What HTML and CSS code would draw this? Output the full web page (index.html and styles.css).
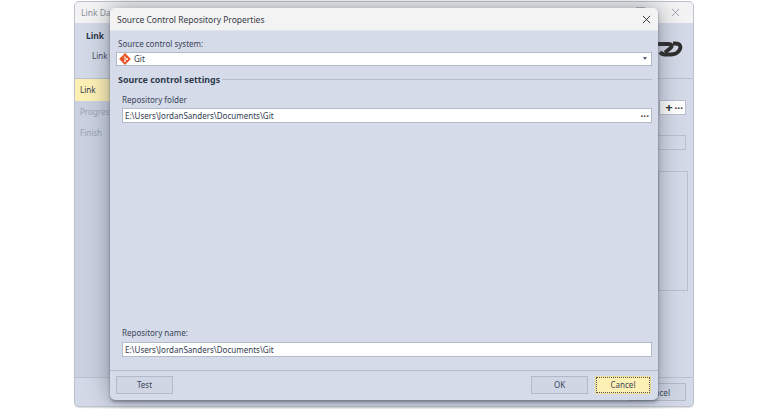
FILE: index.html
```html
<!DOCTYPE html>
<html lang="en">
<head>
<meta charset="utf-8">
<title>Source Control Repository Properties</title>
<link rel="stylesheet" href="styles.css">
</head>
<body>
<div class="stage">
  <section class="wizard">
    <header class="wizard-title">
      <span>Link Database to Source Control</span>
      <div class="wizard-ctrls">
        <i class="wizard-max"></i>
        <svg class="wizard-close" viewBox="0 0 10 10"><path d="M1 1l8 8M9 1l-8 8"/></svg>
      </div>
    </header>
    <div class="wizard-head">
      <div class="wizard-head-text">
        <strong>Link</strong>
        <span class="wizard-sub">Link your database</span>
      </div>
      <svg class="wizard-logo" viewBox="653 40 30 22"><path d="M657 46H668C672 46 672.500 48 670.500 50L665 54.500"/><path d="M673 45.500H675.500C680 45.500 681.500 48.500 679.500 52C677.500 55.500 675 56.500 671 56.500H665C663 56.500 661.500 56 660 54"/></svg>
    </div>
    <div class="wizard-body">
      <nav class="steps">
        <div class="step step-on">Link</div>
        <div class="step">Progress</div>
        <div class="step">Finish</div>
      </nav>
      <div class="wizard-main">
        <div class="mini-btns"><b>+</b><i>···</i></div>
        <div class="mini-field"></div>
        <div class="mini-box"></div>
      </div>
    </div>
    <footer class="wizard-foot"><button class="btn wizard-cancel">Cancel</button></footer>
  </section>

  <section class="dialog">
    <header class="dialog-title">
      <span>Source Control Repository Properties</span>
      <svg class="dialog-close" viewBox="0 0 10 10"><path d="M1 1l8 8M9 1l-8 8"/></svg>
    </header>
    <div class="dialog-body">
      <label class="lbl lbl-top">Source control system:</label>
      <div class="combo">
        <svg class="git" viewBox="0 0 12 12"><path d="M6 .1 11.900 6 6 11.900.1 6z" fill="#e8562a"/><path d="M4.400 2.800 6 4.400M6 4.400v3.400M6 4.400 8 6.200" stroke="#fff" stroke-width=".9" fill="none"/><circle cx="6" cy="8.200" r=".9" fill="#fff"/><circle cx="8.100" cy="6.200" r=".9" fill="#fff"/></svg>
        <span>Git</span>
        <i class="caret"></i>
      </div>
      <div class="group-head"><strong>Source control settings</strong><span class="rule"></span></div>
      <div class="group">
        <label class="lbl">Repository folder</label>
        <div class="field"><span>E:\Users\JordanSanders\Documents\Git</span><i class="dots">···</i></div>
        <div class="spacer"></div>
        <label class="lbl">Repository name:</label>
        <div class="field field-last"><span>E:\Users\JordanSanders\Documents\Git</span></div>
      </div>
    </div>
    <footer class="dialog-foot">
      <button class="btn">Test</button>
      <div class="foot-right">
        <button class="btn">OK</button>
        <button class="btn btn-focus">Cancel</button>
      </div>
    </footer>
  </section>
</div>
</body>
</html>
```
FILE: styles.css
```css
* { box-sizing: border-box; }
html, body { margin: 0; height: 100%; background: #fff; }
body { font-family: "Noto Sans", "Liberation Sans", Arial, sans-serif; font-size: 8px; color: #2f3a4d; overflow: hidden; }
.stage { position: relative; width: 768px; height: 409px; }

/* background wizard: a window on the desktop */
.wizard { position: absolute; left: 74px; top: 1px; width: 620px; height: 406px; display: flex; flex-direction: column; background: #d3d9e7; border: 1px solid #bcc3cd; border-radius: 5px; overflow: hidden; box-shadow: 0 1px 1px #ddd; }
.wizard-title { height: 21px; flex: none; background: #f3f3f3; color: #8a8f98; font-size: 8.5px; display: flex; align-items: center; justify-content: space-between; padding: 0 13px 0 6px; white-space: nowrap; }
.wizard-ctrls { display: flex; align-items: center; gap: 26px; }
.wizard-max { display: block; width: 9px; height: 11px; border: 1px solid #b5b9c0; }
.wizard-close { width: 9px; height: 9px; fill: none; stroke: #8e939b; stroke-width: .9; }
.wizard-head { height: 56px; flex: none; display: flex; justify-content: space-between; padding: 6px 10px 0 11px; border-bottom: 1px solid #b9c0cf; }
.wizard-head-text { display: flex; flex-direction: column; gap: 7px; white-space: nowrap; line-height: 13px; }
.wizard-head-text strong { font-size: 8.5px; color: #2b3548; }
.wizard-sub { padding-left: 6px; color: #3d4759; }
.wizard-logo { width: 30px; height: 22px; margin-top: 9px; fill: none; stroke: #2e2e2e; stroke-width: 3.800; }
.wizard-body { flex: 1; display: flex; min-height: 0; }
.steps { width: 36px; flex: none; background: #c9d0e0; }
.step { height: 21px; padding: 5px 0 0 5px; color: #98a0b2; white-space: nowrap; overflow: hidden; line-height: 12px; }
.step-on { height: 22px; background: #fdf0b4; color: #2f3a4d; }
.wizard-main { flex: 1; position: relative; }
.mini-btns { position: absolute; right: 7px; top: 21px; width: 27px; height: 15px; display: flex; align-items: center; justify-content: flex-end; gap: 2px; padding-right: 2px; background: #fff; border: 1px solid #b8bfce; font-size: 10px; color: #333; }
.mini-btns b { font-size: 13px; line-height: 1; }
.mini-btns i { font-style: normal; font-weight: bold; }
.mini-field { position: absolute; right: 7px; top: 56px; width: 30px; height: 15px; border: 1px solid #b8bfce; }
.mini-box { position: absolute; right: 5px; top: 92px; width: 30px; height: 120px; border: 1px solid #b8bfce; }
.wizard-foot { height: 29px; flex: none; border-top: 1px solid #b9c0cf; display: flex; justify-content: flex-end; align-items: center; padding-right: 7px; }
.wizard-cancel { width: 57px; }

/* modal dialog over the wizard */
.dialog { position: absolute; left: 110px; top: 8px; width: 548px; height: 392px; display: flex; flex-direction: column; background: #d5dbe8; border-radius: 5px; box-shadow: 0 2px 3px rgba(60,65,80,.5), 0 0 22px rgba(60,65,80,.5); overflow: hidden; }
.dialog-title { height: 23px; flex: none; background: #f3f3f3; border-bottom: 1px solid #e1e4ea; display: flex; align-items: center; justify-content: space-between; padding: 0 7px 0 7px; font-size: 8.5px; color: #333a46; white-space: nowrap; }
.dialog-close { width: 9px; height: 9px; fill: none; stroke: #222; stroke-width: 1; }
.dialog-body { flex: 1; display: flex; flex-direction: column; padding: 7px 6px 13px 6px; min-height: 0; }
.lbl { display: block; height: 11px; line-height: 11px; white-space: nowrap; color: #39445a; }
.lbl-top { padding-left: 2px; }
.combo { height: 14px; margin-top: 3px; display: flex; align-items: center; gap: 3px; padding: 0 4px 1px 2px; background: #fff; border: 1px solid #b3bbcb; }
.git { width: 12px; height: 12px; }
.combo span { flex: 1; }
.caret { width: 0; height: 0; border: 2.500px solid transparent; border-top: 3px solid #55617a; border-bottom: 0; }
.group-head { display: flex; align-items: center; gap: 2px; margin-top: 8px; height: 11px; padding-left: 2px; }
.group-head strong { font-size: 8.9px; color: #2f3a4d; white-space: nowrap; }
.rule { flex: 1; height: 1px; background: #b6bdcc; }
.group { flex: 1; display: flex; flex-direction: column; padding: 9px 0 0 6px; }
.field { height: 15px; margin-top: 3px; display: flex; align-items: center; justify-content: space-between; padding: 0 2px; background: #fff; border: 1px solid #b3bbcb; white-space: nowrap; }
.field-last { margin-top: 4px; }
.dots { font-style: normal; font-weight: bold; font-size: 10px; color: #444; }
.spacer { flex: 1; }
.dialog-foot { height: 30px; flex: none; border-top: 1px solid #b4bbca; display: flex; align-items: center; justify-content: space-between; padding: 0 7px 2px 6px; }
.foot-right { display: flex; gap: 7px; }
.btn { width: 57px; height: 18px; padding: 0; font: inherit; font-size: 8px; color: #3b465b; background: #d0d6e4; border: 1px solid #b2b9c8; }
.btn-focus { width: 56px; background: #fdf0b4; border-color: #eedd94; outline: 1px dotted #555; outline-offset: -2px; }
```
